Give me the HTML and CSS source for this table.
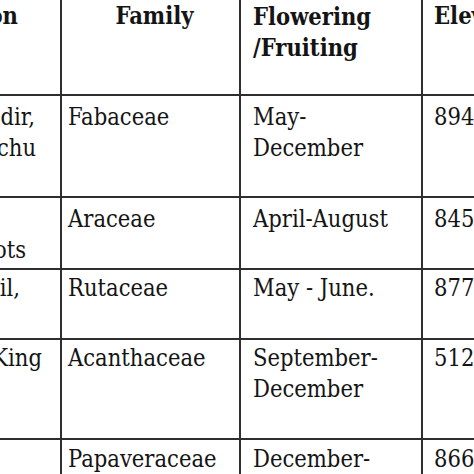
FILE: index.html
```html
<!DOCTYPE html>
<html>
<head>
<meta charset="utf-8">
<link rel="stylesheet" href="styles.css">
</head>
<body>
<div class="table">
  <div class="cell head c1"><span class="ln e18">Description</span></div>
  <div class="cell head c2 center">Family</div>
  <div class="cell head c3 lower">Flowering<br>/Fruiting</div>
  <div class="cell head c4">Elevation (m)</div>

  <div class="cell c1"><span class="ln e35">Khadir,</span><span class="ln e36">Kachu</span></div>
  <div class="cell c2">Fabaceae</div>
  <div class="cell c3">May-<br>December</div>
  <div class="cell c4">894-1200</div>

  <div class="cell c1"><span class="ln eoff">Kanda</span><span class="ln e26">Roots</span></div>
  <div class="cell c2">Araceae</div>
  <div class="cell c3">April-August</div>
  <div class="cell c4">845-1100</div>

  <div class="cell tight c1"><span class="ln e20">Bael, Bil,</span></div>
  <div class="cell tight c2">Rutaceae</div>
  <div class="cell tight c3">May - June.</div>
  <div class="cell tight c4">877-1050</div>

  <div class="cell tight c1"><span class="ln e42">Kalmegh, King</span></div>
  <div class="cell tight c2">Acanthaceae</div>
  <div class="cell tight c3">September-<br>December</div>
  <div class="cell tight c4">512-900</div>

  <div class="cell mid c1"><span class="ln eoff">Satyanashi</span></div>
  <div class="cell mid c2">Papaveraceae</div>
  <div class="cell mid c3">December-<br>March</div>
  <div class="cell mid c4">866-1000</div>
</div>
</body>
</html>
```
FILE: styles.css
```css
html, body {
  margin: 0;
  padding: 0;
  overflow: hidden;
  background: #ffffff;
  width: 474px;
  height: 474px;
}

.table {
  display: grid;
  grid-template-columns: 200px 179px 182px 200px;
  grid-template-rows: 96px 102px 72px 70px 100px 100px;
  margin-left: -138px;
  width: 761px;
  font-family: "DejaVu Serif Condensed", "DejaVu Serif", "Liberation Serif", serif;
  font-stretch: condensed;
  font-size: 23.5px;
  line-height: 31px;
  color: #141414;
}

.cell {
  box-sizing: border-box;
  border-right: 2px solid #2e2e2e;
  border-bottom: 2px solid #2e2e2e;
  padding-top: 6px;
  white-space: nowrap;
  overflow: hidden;
}

.tight { padding-top: 3px; }
.mid { padding-top: 4px; }

.head {
  font-weight: bold;
  padding-top: 1px;
}

.head.lower { padding-top: 2px; }

.c1 { text-align: right; }
.c2 { padding-left: 6px; }
.c3 { padding-left: 12px; }
.c4 { padding-left: 11px; }

.center {
  text-align: center;
  padding-left: 8px;
}

.ln { display: block; }
.e18 { padding-right: 42px; }
.e35 { padding-right: 25px; }
.e36 { padding-right: 24px; }
.e26 { padding-right: 34px; }
.e20 { padding-right: 40px; }
.e42 { padding-right: 18px; }
.eoff { padding-right: 120px; }
```
